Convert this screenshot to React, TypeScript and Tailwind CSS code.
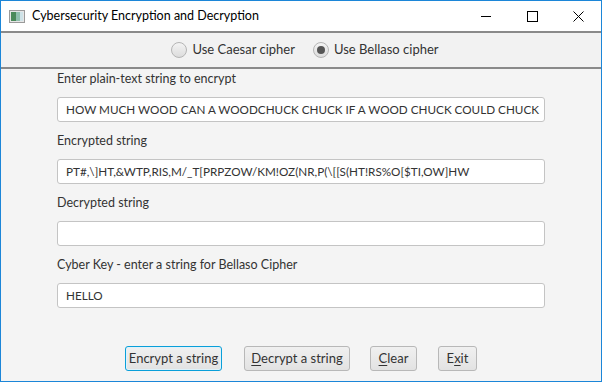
import React, { useState } from 'react';

const font = { fontFamily: '"Segoe UI", Lato, "Open Sans", sans-serif' };

const Field = ({ label, value }: { label: string; value: string }) => (
  <div className="flex flex-col">
    <div className="h-[17px] leading-[17px] text-[12.5px] text-[#333]">{label}</div>
    <div className="mt-[10px] h-[25px] w-[488px] rounded-[3px] border border-[#c4c4c4] bg-white px-[8px] text-[11.7px] leading-[23px] text-[#333] whitespace-nowrap overflow-hidden">
      {value}
    </div>
  </div>
);

const Radio = ({ checked, label, onClick }: { checked: boolean; label: string; onClick: () => void }) => (
  <button onClick={onClick} className="flex items-center gap-[5px] text-[13px] text-[#333]">
    <span className="flex h-[16px] w-[16px] items-center justify-center rounded-full border border-[#b5b5b5] bg-gradient-to-b from-[#f4f4f4] to-[#dcdcdc]">
      {checked && <span className="h-[8px] w-[8px] rounded-full bg-[#555]" />}
    </span>
    {label}
  </button>
);

const Btn = ({ children, w, focused }: { children: React.ReactNode; w: string; focused?: boolean }) => (
  <button
    className={
      'h-[25px] rounded-[3px] text-[13px] text-[#333] bg-gradient-to-b from-[#f0f0f0] to-[#e2e2e2] ' +
      w +
      (focused ? ' border border-[#0a9fd9] shadow-[inset_0_0_0_1px_#dff2fa]' : ' border border-[#b8b8b8]')
    }
  >
    {children}
  </button>
);

export default function App() {
  const [cipher, setCipher] = useState<'caesar' | 'bellaso'>('bellaso');

  return (
    <div style={font} className="flex h-[382px] w-[602px] flex-col border border-[#1c86d8] bg-[#f4f4f4]">
      {/* title bar */}
      <div className="flex h-[30px] items-center bg-white">
        <svg width="16" height="13" viewBox="0 0 16 13" className="ml-[8px]">
          <rect x="0.5" y="0.5" width="15" height="12" fill="#e6e6e6" stroke="#9a9a9a" />
          <rect x="2" y="2" width="5" height="9" fill="#4a8a5a" />
          <rect x="7" y="2" width="4" height="9" fill="#8fbfae" />
          <rect x="11" y="2" width="3" height="9" fill="#cfe3e8" />
        </svg>
        <span className="ml-[7px] text-[12.5px] text-black">Cybersecurity Encryption and Decryption</span>
        <div className="ml-auto flex h-full">
          <div className="flex w-[46px] items-center justify-center">
            <svg width="10" height="10" viewBox="0 0 10 10"><path d="M0 5.5H10" stroke="#000" strokeWidth="1" /></svg>
          </div>
          <div className="flex w-[46px] items-center justify-center">
            <svg width="11" height="11" viewBox="0 0 11 11"><rect x="0.5" y="0.5" width="10" height="10" fill="none" stroke="#000" /></svg>
          </div>
          <div className="flex w-[46px] items-center justify-center">
            <svg width="11" height="11" viewBox="0 0 11 11"><path d="M0.5 0.5L10.5 10.5M10.5 0.5L0.5 10.5" stroke="#000" strokeWidth="1" /></svg>
          </div>
        </div>
      </div>

      {/* cipher choice */}
      <div className="flex h-[38px] items-center justify-center gap-[18px] border-y-2 border-[#8a8a8a] bg-[#f2f2f2] pl-[8px]">
        <Radio checked={cipher === 'caesar'} label="Use Caesar cipher" onClick={() => setCipher('caesar')} />
        <Radio checked={cipher === 'bellaso'} label="Use Bellaso cipher" onClick={() => setCipher('bellaso')} />
      </div>

      {/* fields */}
      <div className="flex flex-col gap-[10px] pl-[56px] pt-[1px]">
        <Field label="Enter plain-text string to encrypt" value="HOW MUCH WOOD CAN A WOODCHUCK CHUCK IF A WOOD CHUCK COULD CHUCK" />
        <Field label="Encrypted string" value={'PT#,\\]HT,&WTP,RIS,M/_T[PRPZOW/KM!OZ(NR,P(\\[[S(HT!RS%O[$TI,OW]HW'} />
        <Field label="Decrypted string" value="" />
        <Field label="Cyber Key - enter a string for Bellaso Cipher" value="HELLO" />
      </div>

      {/* buttons */}
      <div className="mt-[38px] flex pl-[124px]">
        <Btn w="w-[97px]" focused>Encrypt a string</Btn>
        <div className="w-[22px]" />
        <Btn w="w-[106px]">
          <span className="underline underline-offset-2">D</span>ecrypt a string
        </Btn>
        <div className="w-[20px]" />
        <Btn w="w-[47px]">
          <span className="underline underline-offset-2">C</span>lear
        </Btn>
        <div className="w-[21px]" />
        <Btn w="w-[39px]">
          E<span className="underline underline-offset-2">x</span>it
        </Btn>
      </div>
    </div>
  );
}
